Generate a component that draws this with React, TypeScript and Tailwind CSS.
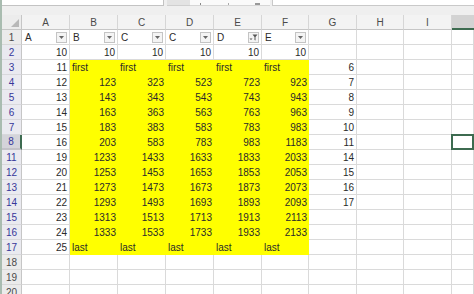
import React from 'react';

type Cell = string | number | null;

const colLetters = ['A', 'B', 'C', 'D', 'E', 'F', 'G', 'H', 'I', 'J'];

// row number -> values for columns A..J
const rows: { n: number; cells: Cell[] }[] = [
  { n: 2, cells: [10, 10, 10, 10, 10, 10, null, null, null, null] },
  { n: 3, cells: [11, 'first', 'first', 'first', 'first', 'first', 6, null, null, null] },
  { n: 4, cells: [12, 123, 323, 523, 723, 923, 7, null, null, null] },
  { n: 5, cells: [13, 143, 343, 543, 743, 943, 8, null, null, null] },
  { n: 6, cells: [14, 163, 363, 563, 763, 963, 9, null, null, null] },
  { n: 7, cells: [15, 183, 383, 583, 783, 983, 10, null, null, null] },
  { n: 8, cells: [16, 203, 583, 783, 983, 1183, 11, null, null, null] },
  { n: 11, cells: [19, 1233, 1433, 1633, 1833, 2033, 14, null, null, null] },
  { n: 12, cells: [20, 1253, 1453, 1653, 1853, 2053, 15, null, null, null] },
  { n: 13, cells: [21, 1273, 1473, 1673, 1873, 2073, 16, null, null, null] },
  { n: 14, cells: [22, 1293, 1493, 1693, 1893, 2093, 17, null, null, null] },
  { n: 15, cells: [23, 1313, 1513, 1713, 1913, 2113, null, null, null, null] },
  { n: 16, cells: [24, 1333, 1533, 1733, 1933, 2133, null, null, null, null] },
  { n: 17, cells: [25, 'last', 'last', 'last', 'last', 'last', null, null, null, null] },
  { n: 18, cells: [null, null, null, null, null, null, null, null, null, null] },
  { n: 19, cells: [null, null, null, null, null, null, null, null, null, null] },
  { n: 20, cells: [null, null, null, null, null, null, null, null, null, null] },
];

const headerRow = ['A', 'B', 'C', 'C', 'D', 'E'];

const font = { fontFamily: '"Liberation Sans", Arial, sans-serif' };

function DropButton({ filtered }: { filtered?: boolean }) {
  return (
    <div className="w-[11px] h-[11px] flex-shrink-0 flex items-center justify-center border border-[#c4c4c4] bg-[#f4f4f4] mr-[2px]">
      {filtered ? (
        <svg width="9" height="7" viewBox="0 0 9 7">
          <path d="M0.5 4.5 L2 6 L3.5 4.5 Z" fill="#555" />
          <path d="M3.5 0.5 H8.5 L6.5 3 V6.5 L5.5 6 V3 Z" fill="#555" />
        </svg>
      ) : (
        <svg width="5" height="3" viewBox="0 0 5 3">
          <path d="M0 0 H5 L2.5 3 Z" fill="#666" />
        </svg>
      )}
    </div>
  );
}

export default function App() {
  return (
    <div
      className="w-[474px] h-[294px] overflow-hidden bg-white border-l-2 border-[#a9bcb0] text-[10px] text-[#2a2a2a]"
      style={font}
    >
      {/* formula bar strip */}
      <div className="h-[15px] bg-[#efefef] flex items-start">
        <div className="w-[162px] h-[6px] bg-white border-b border-r border-[#c3c3c3]" />
        <div className="w-[3px]" />
        <div className="w-[23px] h-[6px] bg-[#e3e3e3] border-b border-[#cfcfcf]" />
        <div className="w-[80px] h-[6px] bg-[#fafafa] border-b border-[#d6d6d6] flex items-end justify-between px-[10px]">
          <span className="w-[1px] h-[2px] bg-[#888]" />
          <span className="w-[1px] h-[2px] bg-[#aaa]" />
          <span className="w-[5px] h-[2px] bg-[#999]" />
        </div>
        <div className="w-[2px]" />
        <div className="flex-1 h-[6px] bg-white border-b border-l border-[#c9c9c9]" />
      </div>

      <div className="grid grid-cols-[20px_48px_48px_48px_48px_48px_47px_48px_47px_48px_1fr] auto-rows-[15px]">
        {/* column headers */}
        <div className="bg-[#ececec] border-r border-b border-[#c6c6c6] flex items-end justify-end p-[2px]">
          <svg width="8" height="8" viewBox="0 0 8 8">
            <path d="M8 0 V8 H0 Z" fill="#b8b8b8" />
          </svg>
        </div>
        {colLetters.map((c) =>
          c === 'J' ? (
            <div
              key={c}
              className="bg-[#d3d3d3] border-b-2 border-[#3d6b50] flex items-center justify-center text-[#444]"
            />
          ) : (
            <div
              key={c}
              className="bg-[#f3f3f3] border-r border-b border-r-[#d6d6d6] border-b-[#c6c6c6] flex items-center justify-center text-[#4a4a4a]"
            >
              {c}
            </div>
          ),
        )}

        {/* row 1: autofilter headings */}
        <div className="bg-[#ebebeb] border-r border-b border-r-[#c6c6c6] border-b-[#d8d8d8] flex items-center justify-center text-[#4a4a4a]">
          1
        </div>
        {colLetters.map((c, i) => (
          <div key={c} className="border-r border-b border-[#dadada] flex items-center justify-between pl-[3px]">
            {i < headerRow.length && (
              <>
                <span>{headerRow[i]}</span>
                <DropButton filtered={i === 4} />
              </>
            )}
          </div>
        ))}

        {/* data rows */}
        {rows.map((r) => (
          <React.Fragment key={r.n}>
            {r.n === 8 ? (
              <div className="bg-[#d4d4da] border-r-2 border-b-2 border-r-[#3d6b50] border-b-[#c2c2c8] flex items-center justify-center text-[#36369a]">
                {r.n}
              </div>
            ) : (
              <div
                className={
                  r.n <= 17
                    ? 'bg-[#eaeaf0] border-r border-b border-r-[#c6c6c6] border-b-[#d8d8dc] flex items-center justify-center text-[#36369a]'
                    : 'bg-[#ebebeb] border-r border-b border-r-[#c6c6c6] border-b-[#d8d8d8] flex items-center justify-center text-[#4a4a4a]'
                }
              >
                {r.n}
              </div>
            )}
            {r.cells.map((v, i) => {
              const yellow = r.n >= 3 && r.n <= 17 && i >= 1 && i <= 5;
              const selected = r.n === 8 && i === 9;
              if (selected) {
                return <div key={i} className="border-2 border-[#3d6b50] -mt-[1px] -ml-[1px]" />;
              }
              return (
                <div
                  key={i}
                  className={
                    yellow
                      ? 'bg-[#ffff00] flex items-center ' +
                        (typeof v === 'number' ? 'justify-end pr-[2px]' : 'justify-start pl-[2px]')
                      : 'border-r border-b border-[#dadada] flex items-center ' +
                        (typeof v === 'number' ? 'justify-end pr-[2px]' : 'justify-start pl-[2px]')
                  }
                >
                  {v}
                </div>
              );
            })}
          </React.Fragment>
        ))}
      </div>
    </div>
  );
}
